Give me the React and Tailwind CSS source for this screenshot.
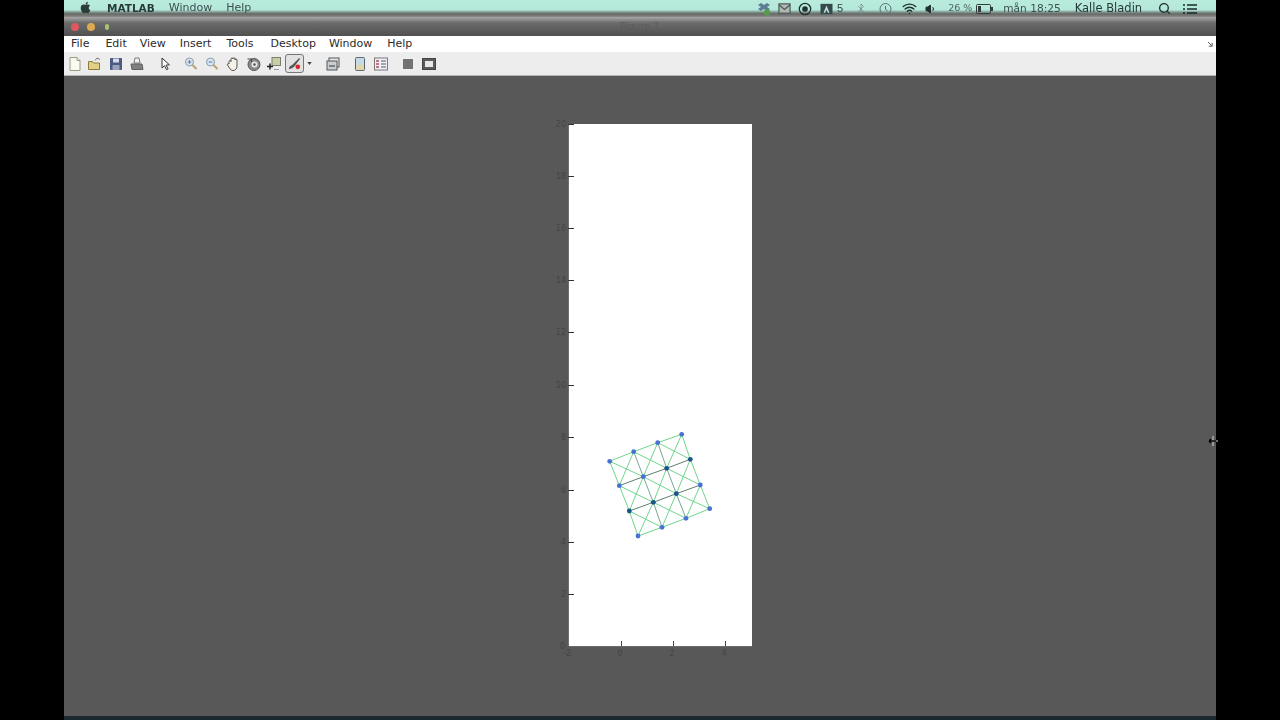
import { FaApple } from 'react-icons/fa';
import { Bluetooth, Wifi, Search, Volume1 } from 'lucide-react';

const nodes = [
  [[609.7, 461.3], [633.7, 451.7], [657.7, 442.7], [681.7, 434.3]],
  [[619.3, 485.7], [643.3, 476.7], [666.7, 468.3], [690.3, 459.3]],
  [[629.3, 511], [653.3, 502.3], [676.3, 493.7], [700.3, 485]],
  [[638, 536], [662, 527.3], [686, 518.3], [709.7, 508.7]],
];

const yTicks = [
  ['20', 124], ['18', 176], ['16', 228], ['14', 280], ['12', 332],
  ['10', 385], ['8', 437], ['6', 490], ['4', 542], ['2', 594],
];
const xTicks = [['0', 621], ['2', 673], ['4', 725]];

function Seg({ a, b, color }) {
  return <line x1={a[0]} y1={a[1]} x2={b[0]} y2={b[1]} stroke={color} strokeWidth="1" />;
}

function Mesh() {
  const green = '#6fd68c';
  const dark = '#5f7f70';
  const lines = [];
  for (let r = 0; r < 4; r++) {
    for (let c = 0; c < 4; c++) {
      const p = nodes[r][c];
      if (c < 3) lines.push(<Seg key={`h${r}${c}`} a={p} b={nodes[r][c + 1]} color={r === 0 || r === 3 ? green : dark} />);
      if (r < 3) lines.push(<Seg key={`v${r}${c}`} a={p} b={nodes[r + 1][c]} color={c === 0 || c === 3 ? green : '#76a88c'} />);
      if (r < 3 && c < 3) {
        lines.push(<Seg key={`d${r}${c}`} a={p} b={nodes[r + 1][c + 1]} color={green} />);
        lines.push(<Seg key={`e${r}${c}`} a={nodes[r][c + 1]} b={nodes[r + 1][c]} color={green} />);
      }
    }
  }
  return (
    <g>
      {lines}
      {nodes.map((row, r) =>
        row.map((p, c) => {
          const inner = (r === 1 && c >= 2) || (r === 2 && c <= 2);
          return <circle key={`n${r}${c}`} cx={p[0]} cy={p[1]} r="2.4" fill={inner ? '#1a5488' : '#4a70d4'} />;
        })
      )}
    </g>
  );
}

function Plot() {
  return (
    <svg viewBox="549 114 215 550" className="w-[215px] h-[550px] block" fontFamily="'DejaVu Sans', sans-serif" fontSize="8" fill="#454545">
      <rect x="569" y="124" width="183" height="522" fill="#ffffff" />
      <line x1="568.5" y1="124" x2="568.5" y2="646" stroke="#707070" />
      <line x1="569" y1="646.5" x2="752" y2="646.5" stroke="#6a6a6a" />
      {yTicks.map(([t, y]) => (
        <g key={t}>
          <line x1="568" y1={y + 0.5} x2="574" y2={y + 0.5} stroke="#333" />
          <text x="566" y={y + 3} textAnchor="end">{t}</text>
        </g>
      ))}
      <text x="565" y="649" textAnchor="end">0</text>
      {xTicks.map(([t, x]) => (
        <g key={t}>
          <line x1={x + 0.5} y1="641" x2={x + 0.5} y2="646" stroke="#444" />
          <text x={x - 1} y="656" textAnchor="middle">{t}</text>
        </g>
      ))}
      <text x="567" y="656" textAnchor="middle">-2</text>
      <Mesh />
    </svg>
  );
}

function Ico({ children, className = '' }) {
  return <svg viewBox="0 0 16 16" className={`w-4 h-4 shrink-0 ${className}`}>{children}</svg>;
}

function Toolbar() {
  return (
    <div className="h-[23px] bg-[#ededed] flex items-center pl-[3px] shrink-0">
      <Ico><path d="M3 1.5h7l3 3v10H3z" fill="#fbfbf2" stroke="#9a9a8c" /><path d="M10 1.5v3h3" fill="#e6e6d4" stroke="#9a9a8c" /></Ico>
      <Ico className="ml-1"><path d="M1.5 13.5v-8h4l1 1.5h6v6.5z" fill="#e0d088" stroke="#8b7c3c" /><path d="M8 4.5l2-2.5 3 1.5" fill="none" stroke="#777" /></Ico>
      <Ico className="ml-[5px]"><rect x="2" y="2" width="12" height="12" rx="1" fill="#4a5a80" /><rect x="5" y="2.5" width="6" height="4" fill="#d8dbe6" /><rect x="4.5" y="9" width="7" height="5" fill="#9aa2bc" /></Ico>
      <Ico className="ml-[5px]"><path d="M5 7l1-5h4l1 5z" fill="#f2f2f2" stroke="#777" /><path d="M2 8h11l1 5.500H3z" fill="#808080" stroke="#606060" /></Ico>
      <Ico className="ml-3"><path d="M5 2l0 10 2.5-2.3 2 4 1.6-.8-2-3.8 3.3-.3z" fill="#fafafa" stroke="#333" strokeWidth="1" /></Ico>
      <Ico className="ml-[10px]"><circle cx="6.5" cy="6" r="4" fill="#d6e6f2" stroke="#8f9ca6" /><path d="M4.7 6h3.6M6.5 4.2v3.6" stroke="#5a7ca8" /><path d="M9.5 9l4 4" stroke="#b9a46c" strokeWidth="2" /></Ico>
      <Ico className="ml-[5px]"><circle cx="6.5" cy="6" r="4" fill="#d6e6f2" stroke="#8f9ca6" /><path d="M4.7 6h3.6" stroke="#5a7ca8" /><path d="M9.5 9l4 4" stroke="#b9a46c" strokeWidth="2" /></Ico>
      <Ico className="ml-[5px]"><path d="M4 8V5.5a1 1 0 012 0V3a1 1 0 012 0v-.2a1 1 0 012 0V4a1 1 0 012 0v6c0 3-2 4.500-4 4.500S5.500 13.500 4.500 12L2.500 9c-.5-1 .8-2 1.500-1z" fill="#f6f1e6" stroke="#444" strokeWidth="0.9" /></Ico>
      <Ico className="ml-[5px]"><circle cx="8" cy="8.500" r="6" fill="#8a8a8a" stroke="#555" /><circle cx="8.500" cy="8.500" r="3" fill="#e8e8e8" /><circle cx="8.500" cy="8.500" r="1.300" fill="#555" /><path d="M1.500 3h4v3" fill="none" stroke="#444" /></Ico>
      <Ico className="ml-1"><rect x="6" y="1.500" width="8.500" height="8" fill="#c6cfa8" stroke="#7c8068" /><path d="M1 10.500h6M4 7.500v6" stroke="#222" strokeWidth="1.500" /><path d="M8 13.500h5" stroke="#99a" /></Ico>
      <div className="ml-[3px] w-[19px] h-[19px] rounded-[3px] border border-[#777] bg-[#e2e2e2] flex items-center justify-center shrink-0">
        <svg viewBox="0 0 16 16" className="w-[15px] h-[15px]"><path d="M2 14c0-3 2-4 3.500-4.500L13 2l1 1-6 8c-1.500 1.500-3.500 3-6 3z" fill="#555" /><circle cx="11.500" cy="11.500" r="2.500" fill="#d8232a" /></svg>
      </div>
      <svg viewBox="0 0 6 4" className="w-[5px] h-[3px] ml-[3px] shrink-0"><path d="M0 0h6L3 4z" fill="#444" /></svg>
      <Ico className="ml-[13px]"><rect x="4" y="2" width="10" height="9" fill="#e6e8ea" stroke="#555" /><rect x="2" y="5" width="10" height="9" fill="#c9ced2" stroke="#555" /><path d="M4 10h6" stroke="#333" /></Ico>
      <Ico className="ml-[11px]"><rect x="3.500" y="1.500" width="9" height="13" rx="1" fill="#c6dbe4" stroke="#5a6570" /><rect x="4.500" y="9" width="7" height="5" fill="#e4d8a8" /></Ico>
      <Ico className="ml-[5px]"><rect x="1.500" y="2" width="13" height="12" fill="#f2f0f2" stroke="#777" /><path d="M3 5h3M3 8h3M3 11h3" stroke="#b04a60" strokeWidth="1.500" /><path d="M8 5h5M8 8h5M8 11h5" stroke="#4a5a80" /></Ico>
      <Ico className="ml-[11px]"><rect x="3" y="3" width="10" height="10" fill="#737373" /></Ico>
      <Ico className="ml-[5px]"><rect x="1.500" y="2.500" width="13" height="11" fill="#5c5c5c" stroke="#444" /><rect x="4" y="5" width="8" height="6" fill="#e8e8e8" /></Ico>
    </div>
  );
}

function MenuBarIcons() {
  return (
    <div className="absolute left-[693px] top-0 h-[17px] flex items-center text-[11px] text-[#34464a]">
      <svg viewBox="0 0 14 14" className="w-[14px] h-[14px] shrink-0"><path d="M1 3l3-2 3 2 3-2 3 2-3 2 3 2-3 2-3-2-3 2-3-2 3-2z" fill="#5c7e94" /><circle cx="10" cy="10.500" r="3.200" fill="#5a9a4a" /></svg>
      <svg viewBox="0 0 14 14" className="w-[13px] h-[13px] ml-[7px] shrink-0"><rect x="1" y="2" width="12" height="10" fill="#b0b8b0" stroke="#4a5a5a" strokeWidth="1.300" /><path d="M1 3l6 5 6-5" fill="none" stroke="#4a5a5a" strokeWidth="1.300" /></svg>
      <svg viewBox="0 0 14 14" className="w-[14px] h-[14px] ml-[7px] shrink-0"><circle cx="7" cy="7" r="5.700" fill="none" stroke="#20302f" strokeWidth="1.300" /><circle cx="7" cy="7" r="2.800" fill="#20302f" /></svg>
      <svg viewBox="0 0 14 14" className="w-[13px] h-[12px] ml-[8px] shrink-0"><rect x="0" y="1" width="14" height="12" fill="#38484a" /><path d="M7 3L3.500 11.500h2L7 8l1.500 3.500h2z" fill="#b8e4dc" /></svg>
      <span className="ml-[4px] font-['Liberation_Sans',sans-serif]">5</span>
      <Bluetooth className="w-[12px] h-[12px] ml-[12px] shrink-0 text-[#71858a]" strokeWidth={1.500} />
      <svg viewBox="0 0 14 14" className="w-[14px] h-[14px] ml-[11px] shrink-0" fill="none" stroke="#5a6e72" strokeWidth="1"><circle cx="7.500" cy="7" r="5.500" /><path d="M7.500 4v3.300l2 1.500" /></svg>
      <Wifi className="w-[17px] h-[15px] ml-[9px] shrink-0 text-[#1f2f30]" strokeWidth={2.200} />
      <Volume1 className="w-[12px] h-[12px] ml-[7px] shrink-0 text-[#1f2f30] fill-[#1f2f30]" strokeWidth={2} />
      <span className="ml-[11px] text-[#4f6366] text-[9.500px] whitespace-nowrap">26 %</span>
      <svg viewBox="0 0 17 10" className="w-[17px] h-[10px] ml-[4px] shrink-0"><rect x="0.500" y="0.500" width="14" height="9" rx="1" fill="none" stroke="#303c3e" /><rect x="2" y="2" width="3" height="6" fill="#303c3e" /><rect x="15" y="3" width="2" height="4" fill="#303c3e" /></svg>
      <span className="ml-[10px] text-[#3e5052] whitespace-nowrap text-[10.600px]">mån 18:25</span>
      <span className="ml-[14px] text-[#28383a] whitespace-nowrap text-[11.500px]">Kalle Bladin</span>
      <Search className="w-[13px] h-[13px] ml-[16px] shrink-0 text-[#1f2f30]" strokeWidth={2.400} />
      <svg viewBox="0 0 14 10" className="w-[14px] h-[10px] ml-[12px] shrink-0" stroke="#1a2a2c" strokeWidth="1.500"><path d="M4 1h10M4 5h10M4 9h10M0 1h2M0 5h2M0 9h2" /></svg>
    </div>
  );
}

export default function App() {
  return (
    <div className="w-[1280px] h-[720px] bg-black flex justify-center overflow-hidden font-['DejaVu_Sans',sans-serif]">
      <div className="w-[1152px] h-full flex flex-col relative blur-[0.6px]">
        <div className="h-[17px] shrink-0 relative bg-[linear-gradient(to_bottom,#b9ebdc_0%,#b4e8da_58%,#7e938c_72%,#666864_82%,#8a8a8a_100%)]">
          <FaApple className="absolute left-[15px] top-[1px] w-[13px] h-[13px] text-[#2c3c38]" />
          <div className="absolute left-[43px] top-0 h-[17px] flex items-center text-[11px] text-[#2a3a3a] whitespace-nowrap">
            <span className="font-bold text-[10.500px]">MATLAB</span>
            <span className="ml-[14px] text-[#3c4f50]">Window</span>
            <span className="ml-[14px] text-[#3c4f50]">Help</span>
          </div>
          <MenuBarIcons />
        </div>
        <div className="h-[19px] shrink-0 relative flex items-center justify-center bg-[linear-gradient(to_bottom,#a8a8a8_0%,#8c8c8c_14%,#6c6c6c_30%,#505050_100%)]">
          <span className="absolute left-[7px] top-[6px] w-[8px] h-[8px] rounded-full bg-[#dc5a5f]" />
          <span className="absolute left-[23px] top-[6px] w-[8px] h-[8px] rounded-full bg-[#dfaa4e]" />
          <span className="absolute left-[41px] top-[7px] w-[4px] h-[6px] rounded-full bg-[#a8c070]" />
          <span className="text-[10px] text-[#5c5c5c]">Figure 1</span>
        </div>
        <div className="h-[16px] shrink-0 bg-white flex items-center pl-[7px] pt-[1px] text-[11px] text-[#2c2c2c] relative whitespace-nowrap">
          <span>File</span>
          <span className="ml-[16px]">Edit</span>
          <span className="ml-[13px]">View</span>
          <span className="ml-[14px]">Insert</span>
          <span className="ml-[15px]">Tools</span>
          <span className="ml-[17px]">Desktop</span>
          <span className="ml-[13px]">Window</span>
          <span className="ml-[15px]">Help</span>
          <svg viewBox="0 0 6 6" className="absolute right-[3px] top-[6px] w-[5px] h-[5px]"><path d="M0 0l4 4M5 1v4H1" stroke="#333" fill="none" /></svg>
        </div>
        <Toolbar />
        <div className="h-[1px] bg-[#b5b5b5] shrink-0" />
        <div className="flex-1 bg-[#585858] pt-[38px] pl-[485px]">
          <Plot />
        </div>
        <div className="h-[4px] shrink-0 bg-[#1b2830]" />
        <svg viewBox="0 0 10 10" className="absolute left-[1144px] top-[436px] w-[10px] h-[10px]"><path d="M0 5h10M5 0v10" stroke="#d8d8d8" strokeWidth="2" opacity="0.500" /><path d="M1 5h7M3 3L1 5l2 2" stroke="#000" fill="none" strokeWidth="1.500" /></svg>
      </div>
    </div>
  );
}
